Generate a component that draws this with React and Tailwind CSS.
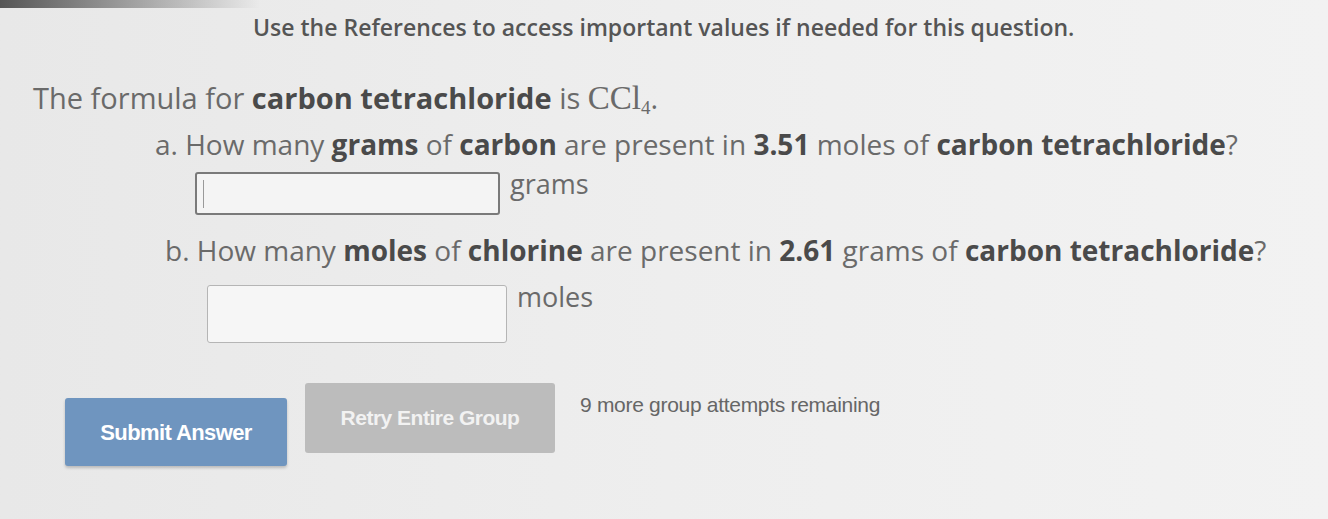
import React from 'react';

const sans = { fontFamily: '"Open Sans", "DejaVu Sans", sans-serif' };

const App = () => {
  return (
    <div
      className="relative w-[1328px] h-[519px] overflow-hidden bg-gradient-to-r from-[#e8e8e8] via-[#eeeeee] to-[#f2f2f2] text-[#6a6a6a]"
      style={sans}
    >
      {/* frame edge in the corner of the photo */}
      <div className="absolute left-0 top-0 h-[8px] w-[260px] bg-gradient-to-r from-[#555] to-transparent" />

      <div className="flex flex-col">
        <p className="ml-[253px] mt-[12px] whitespace-nowrap text-[23px] font-semibold leading-[30px] text-[#555]">
          Use the References to access important values if needed for this question.
        </p>

        <p className="ml-[33px] mt-[38px] text-[29px] leading-[36px]">
          The formula for <b className="font-bold text-[#4a4a4a]">carbon tetrachloride</b> is{' '}
          <span className="text-[33px]" style={{ fontFamily: '"Liberation Serif", serif' }}>
            CCl<sub className="text-[19px]">4</sub>
          </span>
          .
        </p>

        <p className="ml-[155px] mt-[10px] text-[28px] leading-[36px]">
          a. How many <b className="font-bold text-[#4a4a4a]">grams</b> of{' '}
          <b className="font-bold text-[#4a4a4a]">carbon</b> are present in{' '}
          <b className="font-bold text-[#4a4a4a]">3.51</b> moles of{' '}
          <b className="font-bold text-[#4a4a4a]">carbon tetrachloride</b>?
        </p>

        <div className="ml-[195px] mt-[10px] flex items-start gap-[10px]">
          <div className="flex h-[43px] w-[305px] items-center rounded-[3px] border-2 border-[#7a7a7a] bg-[#f4f4f4] pl-[6px]">
            <div className="h-[28px] w-px bg-[#999]" />
          </div>
          <span className="-mt-[6px] text-[27px] leading-[36px]">grams</span>
        </div>

        <p className="ml-[165px] mt-[17px] text-[28px] leading-[36px]">
          b. How many <b className="font-bold text-[#4a4a4a]">moles</b> of{' '}
          <b className="font-bold text-[#4a4a4a]">chlorine</b> are present in{' '}
          <b className="font-bold text-[#4a4a4a]">2.61</b> grams of{' '}
          <b className="font-bold text-[#4a4a4a]">carbon tetrachloride</b>?
        </p>

        <div className="ml-[207px] mt-[17px] flex items-start gap-[10px]">
          <div className="h-[58px] w-[300px] rounded-[3px] border border-[#b5b5b5] bg-[#f6f6f6]" />
          <span className="-mt-[6px] text-[27px] leading-[36px]">moles</span>
        </div>

        <div
          className="ml-[65px] mt-[40px] flex items-start gap-[18px]"
          style={{ fontFamily: '"Liberation Sans", Arial, sans-serif' }}
        >
          <button className="mt-[15px] h-[68px] w-[222px] rounded-[3px] bg-[#6f95bf] text-[22px] font-bold tracking-[-0.6px] text-white shadow-[0_2px_3px_rgba(0,0,0,0.2)]">
            Submit Answer
          </button>
          <button className="h-[70px] w-[250px] rounded-[3px] bg-[#bcbcbc] text-[21px] font-bold tracking-[-0.5px] text-[#f2f2f2]">
            Retry Entire Group
          </button>
          <span className="ml-[7px] mt-[6px] text-[21px] tracking-[-0.3px] text-[#666]">
            9 more group attempts remaining
          </span>
        </div>
      </div>
    </div>
  );
};

export default App;
